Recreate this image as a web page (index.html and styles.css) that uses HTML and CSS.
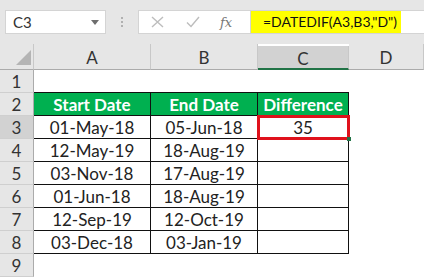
FILE: index.html
```html
<!DOCTYPE html>
<html lang="en">
<head>
  <meta charset="UTF-8">
  <title>DATEDIF</title>
  <link rel="stylesheet" href="styles.css">
</head>
<body>

<div class="formula-bar">
  <div class="name-box">
    <span>C3</span>
    <svg class="arrow" width="8" height="5" viewBox="0 0 8 5"><path d="M0 0H8L4 5Z" fill="#6e6e6e"/></svg>
  </div>
  <div class="dots"><i></i><i></i><i></i></div>
  <div class="buttons">
    <svg width="13" height="12" viewBox="0 0 13 12"><path d="M1 1L12 11M12 1L1 11" stroke="#bdbdbd" stroke-width="1.4" fill="none"/></svg>
    <svg width="14" height="12" viewBox="0 0 14 12"><path d="M1 6.5L5 10.5L13 1" stroke="#bdbdbd" stroke-width="1.4" fill="none"/></svg>
    <span class="fx">fx</span>
  </div>
  <div class="formula">
    <span class="formula-text">=DATEDIF(A3,B3,"D")</span>
  </div>
</div>

<div class="sheet">
  <div class="corner"><div class="tri"></div></div>
  <div class="col-head">A</div>
  <div class="col-head">B</div>
  <div class="col-head active">C</div>
  <div class="col-head">D</div>

  <div class="row-head">1</div>
  <div></div><div></div><div></div><div></div>

  <div class="row-head">2</div>
  <div class="cell head first">Start Date</div>
  <div class="cell head">End Date</div>
  <div class="cell head">Difference</div>
  <div></div>

  <div class="row-head active">3</div>
  <div class="cell first">01-May-18</div>
  <div class="cell">05-Jun-18</div>
  <div class="cell selected">35</div>
  <div></div>

  <div class="row-head">4</div>
  <div class="cell first">12-May-19</div>
  <div class="cell">18-Aug-19</div>
  <div class="cell"></div>
  <div></div>

  <div class="row-head">5</div>
  <div class="cell first">03-Nov-18</div>
  <div class="cell">17-Aug-19</div>
  <div class="cell"></div>
  <div></div>

  <div class="row-head">6</div>
  <div class="cell first">01-Jun-18</div>
  <div class="cell">18-Aug-19</div>
  <div class="cell"></div>
  <div></div>

  <div class="row-head">7</div>
  <div class="cell first">12-Sep-19</div>
  <div class="cell">12-Oct-19</div>
  <div class="cell"></div>
  <div></div>

  <div class="row-head">8</div>
  <div class="cell first">03-Dec-18</div>
  <div class="cell">03-Jan-19</div>
  <div class="cell"></div>
  <div></div>

  <div class="row-head">9</div>
  <div></div><div></div><div></div><div></div>
</div>

</body>
</html>
```

FILE: styles.css
```css
body {
  margin: 0;
  width: 424px;
  height: 278px;
  overflow: hidden;
  background: white;
  font-family: Lato, "Open Sans", sans-serif;
  color: #222;
}

.formula-bar {
  height: 44px;
  background: #e6e6e6;
  display: flex;
  align-items: center;
  padding-left: 5px;
  box-sizing: border-box;
}

.name-box {
  width: 101px;
  height: 24px;
  box-sizing: border-box;
  background: white;
  border: 1px solid #d4d4d4;
  display: flex;
  align-items: center;
  justify-content: space-between;
  padding: 0 6px 0 7px;
  font-size: 15px;
  color: #333;
}

.arrow {
  margin-top: 1px;
}

.dots {
  width: 32px;
  display: flex;
  flex-direction: column;
  align-items: center;
  gap: 2px;
}

.dots i {
  width: 2px;
  height: 2px;
  background: #b0b0b0;
}

.buttons {
  width: 112px;
  height: 24px;
  box-sizing: border-box;
  background: white;
  border: 1px solid #d4d4d4;
  border-right: none;
  display: flex;
  align-items: center;
  padding-left: 12px;
  gap: 22px;
}

.fx {
  font-family: "DejaVu Serif", serif;
  font-style: italic;
  font-size: 13px;
  color: #777;
  margin-left: -2px;
}

.formula {
  flex: 1;
  height: 24px;
  box-sizing: border-box;
  background: white;
  border: 1px solid #d4d4d4;
  border-right: none;
  display: flex;
}

.formula-text {
  background: #ffff00;
  padding: 0 4px 0 12px;
  font-size: 14px;
  line-height: 22px;
  color: #111;
}

.sheet {
  display: grid;
  grid-template-columns: 34px 117px 107px 91px 1fr;
  grid-template-rows: 26px repeat(9, 23px);
}

.corner {
  background: #e6e6e6;
  border-right: 1px solid #c8c8c8;
  border-bottom: 1px solid #ababab;
  display: flex;
  justify-content: flex-end;
  align-items: flex-end;
  padding: 0 2px 4px 0;
}

.tri {
  width: 15px;
  height: 15px;
  background: #b4b4b4;
  clip-path: polygon(100% 0, 100% 100%, 0 100%);
}

.col-head {
  background: #e6e6e6;
  border-right: 1px solid #c8c8c8;
  border-bottom: 1px solid #ababab;
  display: flex;
  justify-content: center;
  align-items: center;
  font-size: 17px;
  color: #333;
  padding-top: 2px;
}

.col-head.active {
  background: #d2d2d2;
  border-bottom: 2px solid #217346;
  margin-top: 2px;
}

.row-head {
  background: #e6e6e6;
  border-right: 1px solid #ababab;
  border-bottom: 1px solid #cfcfcf;
  display: flex;
  justify-content: center;
  align-items: center;
  font-size: 17px;
  color: #333;
}

.row-head.active {
  background: #d2d2d2;
}

.cell {
  border-right: 1px solid #111;
  border-bottom: 1px solid #111;
  display: flex;
  justify-content: center;
  align-items: center;
  font-size: 17px;
}

.cell.head {
  background: #00b050;
  color: white;
  font-weight: bold;
  border-top: 1px solid #111;
  margin-top: -1px;
}

.selected {
  position: relative;
}

.selected::after {
  content: "";
  position: absolute;
  left: -1px;
  top: -1px;
  right: -2px;
  bottom: -2px;
  border: 3px solid #e0121c;
}

.selected::before {
  content: "";
  position: absolute;
  right: -3px;
  bottom: -3px;
  width: 4px;
  height: 4px;
  background: #217346;
  z-index: 1;
}
```
